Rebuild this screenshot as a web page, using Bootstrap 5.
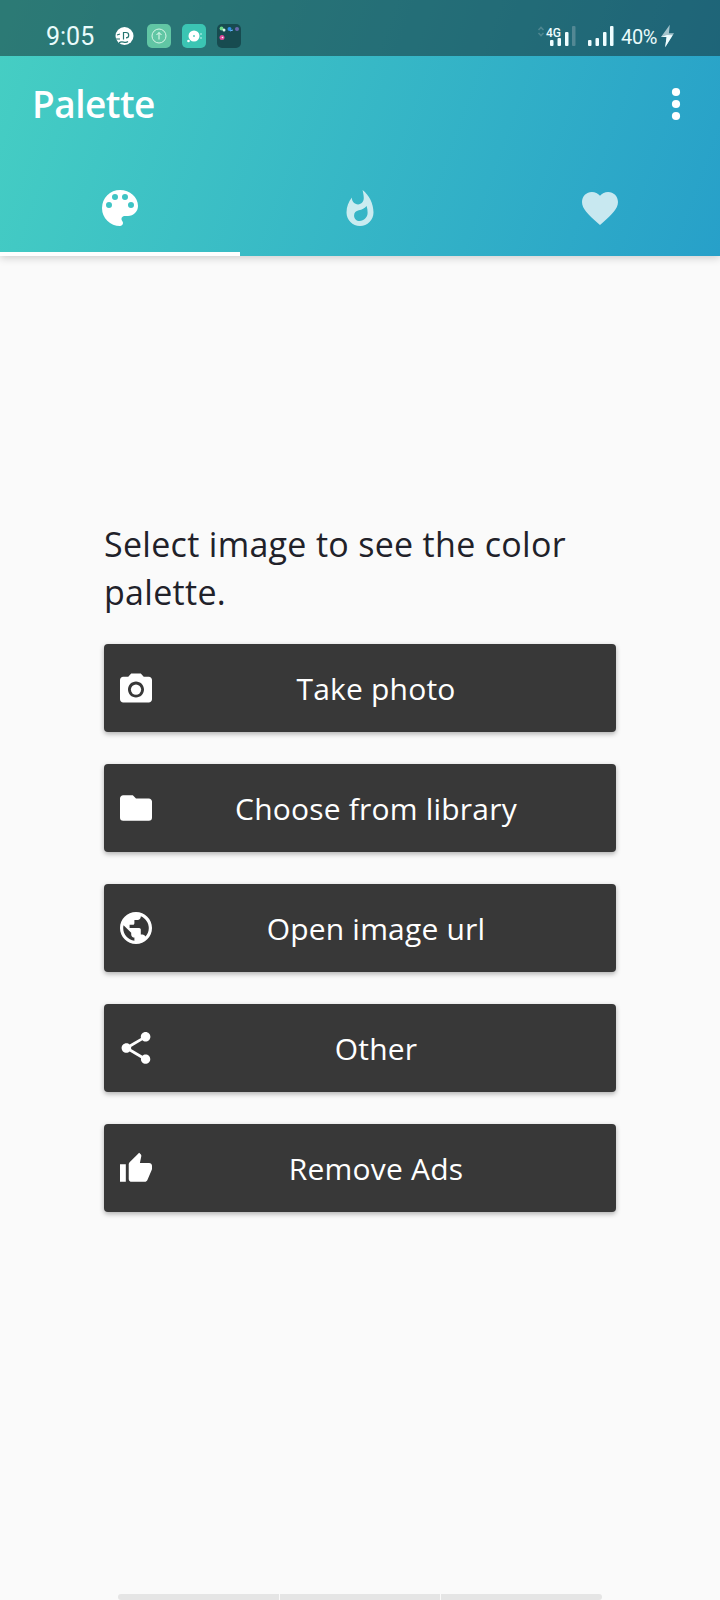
<!DOCTYPE html>
<html lang="en">
<head>
<meta charset="utf-8">
<meta name="viewport" content="width=device-width, initial-scale=1">
<title>Palette</title>
<link href="https://cdn.jsdelivr.net/npm/bootstrap@5.3.0/dist/css/bootstrap.min.css" rel="stylesheet">
<style>
body{background:#fafafa;font-family:"Open Sans","Noto Sans",sans-serif;color:#212129;height:1600px;overflow:hidden}
.top-area{height:256px;background:linear-gradient(110deg,#46cfc3 0%,#27a0c9 100%);box-shadow:0 2px 8px rgba(0,0,0,.18)}
.status-strip{height:56px;padding:17px 46px 0 46px;background:rgba(18,34,36,.49);font-family:Roboto,sans-serif;color:#e9fbfb}
.clock{font-size:25px;line-height:39px;width:68px}
.battery{font-size:20px;line-height:41px;letter-spacing:-.4px}
.title-row{height:104px;padding:0 40px 0 32px}
.app-title{font-family:"Open Sans",sans-serif;font-weight:600;font-size:37px;line-height:50px;margin-top:-8px;letter-spacing:-.5px}
.tab-item{height:96px;border-bottom:4px solid transparent;padding-top:4px;color:#fff}
.tab-item.active{border-color:#fff}
.tab-item:not(.active) svg{opacity:.74}
.content{padding:264px 104px 0}
.prompt{font-size:34px;line-height:48px;letter-spacing:.3px;height:96px;margin-bottom:28px;white-space:nowrap}
.stack{gap:32px}
.action{height:88px;background:#383838;color:#fff;border:0;border-radius:4px;padding:0 16px;box-shadow:0 2px 5px rgba(0,0,0,.3);font-size:30px;line-height:44px;letter-spacing:.2px}
.action:hover{background:#444;color:#fff}
.caption-text{padding-top:2px}
.nav-hint{gap:1px;margin:382px 14px 0}
.nav-hint span{height:6px;background:#e5e5e5}
</style>
</head>
<body>
<header class="top-area text-white">
  <div class="status-strip d-flex align-items-start">
    <span class="clock">9:05</span>
    <svg width="130" height="28" viewBox="114 22 130 28" style="margin-top:5px" fill="none">
      <circle cx="124.500" cy="36" r="9" fill="#fff"/>
      <path d="M123.500 39.500v-7h2.500a2.700 2.700 0 0 1 0 5.400M117 35l3-1M116 39h4M119 43c3-3 6 1 9-1.500" stroke="#25746f" stroke-width="1.200"/>
      <rect x="147" y="24" width="24" height="24" rx="5" fill="#61c6a4"/>
      <circle cx="159" cy="36" r="7" stroke="#d6f5e6"/><path d="M159 39.500v-7M156.500 35l2.500-2.500 2.500 2.500" stroke="#e7fff2"/>
      <rect x="182" y="24" width="24" height="24" rx="5" fill="#3bc5b3"/>
      <circle cx="194" cy="36" r="5.500" fill="#fff"/><circle cx="188.500" cy="41" r="1.300" fill="#fff"/><circle cx="194" cy="36" r="1" fill="#55cfc0"/>
      <path d="M200 34h2M200 38h2" stroke="#c5f3ec"/>
      <rect x="217" y="24" width="24" height="24" rx="5" fill="#174b50"/>
      <circle cx="221.500" cy="28.500" r="1.900" fill="#6bd889"/><circle cx="224" cy="30" r="1.500" fill="#d6f5e6"/>
      <circle cx="229.500" cy="29" r="2" fill="#2d8fe8"/><path d="M230 31l3-1" stroke="#68b7ff"/>
      <circle cx="237" cy="29" r="2" fill="#6868ad"/><circle cx="222" cy="37.500" r="2.500" fill="#e0489a"/><circle cx="222.500" cy="37.500" r=".8" fill="#fff"/>
    </svg>
    <svg class="ms-auto" width="81" height="28" viewBox="536 22 81 28" style="margin-top:5px">
      <path d="M538.500 30l2.500-2.500 2.500 2.500M538.500 33l2.500 2.500 2.500-2.500" fill="none" stroke="#4f8690" stroke-width="1.600"/>
      <g fill="#effdff"><rect x="550" y="40" width="3.500" height="6" rx="1"/><rect x="557.500" y="38" width="3.500" height="8" rx="1"/><rect x="565" y="32" width="3.500" height="14" rx="1"/>
      <rect x="588" y="40" width="3.500" height="6" rx="1"/><rect x="595.500" y="38" width="3.500" height="8" rx="1"/><rect x="603" y="32" width="3.500" height="14" rx="1"/><rect x="610" y="26" width="3.500" height="20" rx="1"/>
      <text x="546" y="37" font-family="Roboto,sans-serif" font-weight="500" font-size="13.500" textLength="15" lengthAdjust="spacingAndGlyphs">4G</text></g>
      <rect x="572" y="26" width="3.500" height="20" rx="1" fill="#538894"/>
    </svg>
    <span class="battery ms-1">40%</span>
    <svg width="13" height="24" viewBox="0 0 14 24" class="ms-1" style="margin-top:7px"><path d="M9.500 0L0 13h6L4.500 24 14 9H8.500z" fill="#a5c4cc"/><path d="M0 13L6.500 11 12.500 11.300 4.500 24 6 13z" fill="#effdff"/></svg>
  </div>
  <div class="title-row d-flex align-items-center justify-content-between">
    <div class="app-title">Palette</div>
    <svg width="8" height="32" viewBox="0 0 8 32" fill="#fff" style="margin-top:-8px" overflow="visible"><circle cx="4" cy="4" r="4.100"/><circle cx="4" cy="16" r="4.100"/><circle cx="4" cy="28" r="4.100"/></svg>
  </div>
  <nav class="row g-0">
    <div class="col-4 tab-item active d-flex align-items-center justify-content-center"><svg width="36" height="36" viewBox="3 3 18 18" fill="currentColor"><path d="M12 3a9 9 0 0 0 0 18c.83 0 1.500-.67 1.500-1.500 0-.39-.15-.74-.39-1.010-.23-.26-.38-.61-.38-.99 0-.83.67-1.500 1.500-1.500H16c2.760 0 5-2.240 5-5 0-4.420-4.030-8-9-8zm-5.500 9a1.500 1.500 0 1 1 0-3 1.500 1.500 0 0 1 0 3zm3-4a1.500 1.500 0 1 1 0-3 1.500 1.500 0 0 1 0 3zm5 0a1.500 1.500 0 1 1 0-3 1.500 1.500 0 0 1 0 3zm3 4a1.500 1.500 0 1 1 0-3 1.500 1.500 0 0 1 0 3z"/></svg></div>
    <div class="col-4 tab-item d-flex align-items-center justify-content-center"><svg width="28" height="36" viewBox="4 .67 16 21.330" fill="currentColor"><path d="M13.500.67s.74 2.650.74 4.800c0 2.060-1.350 3.730-3.410 3.730-2.070 0-3.630-1.670-3.630-3.730l.03-.36C5.210 7.510 4 10.620 4 14c0 4.420 3.580 8 8 8s8-3.580 8-8C20 8.610 17.410 3.800 13.500.67zM11.710 19c-1.780 0-3.220-1.400-3.220-3.140 0-1.620 1.050-2.760 2.810-3.120 1.770-.36 3.600-1.210 4.620-2.580.39 1.290.59 2.650.59 4.040 0 2.650-2.150 4.800-4.800 4.800z"/></svg></div>
    <div class="col-4 tab-item d-flex align-items-center justify-content-center"><svg width="36" height="33" viewBox="2 3 20 18.350" fill="currentColor"><path d="M12 21.350l-1.450-1.320C5.400 15.360 2 12.280 2 8.500 2 5.420 4.420 3 7.500 3c1.740 0 3.410.81 4.500 2.090C13.090 3.810 14.760 3 16.500 3 19.580 3 22 5.420 22 8.500c0 3.780-3.400 6.860-8.550 11.540L12 21.350z"/></svg></div>
  </nav>
</header>
<main class="content">
  <p class="prompt">Select image to see the color<br>palette.</p>
  <div class="stack d-flex flex-column">
    <button class="action btn d-flex align-items-center"><svg width="32" height="32" viewBox="2 1 20 20" fill="currentColor"><circle cx="12" cy="12" r="3.200"/><path d="M9 2L7.170 4H4c-1.100 0-2 .9-2 2v12c0 1.100.9 2 2 2h16c1.100 0 2-.9 2-2V6c0-1.100-.9-2-2-2h-3.170L15 2H9zm3 15c-2.760 0-5-2.240-5-5s2.240-5 5-5 5 2.240 5 5-2.240 5-5 5z"/></svg><span class="caption-text flex-grow-1">Take photo</span></button>
    <button class="action btn d-flex align-items-center"><svg width="32" height="32" viewBox="2 2 20 20" fill="currentColor"><path d="M10 4H4c-1.110 0-2 .89-2 2v12a2 2 0 0 0 2 2h16a2 2 0 0 0 2-2V8c0-1.110-.9-2-2-2h-8l-2-2z"/></svg><span class="caption-text flex-grow-1">Choose from library</span></button>
    <button class="action btn d-flex align-items-center"><svg width="32" height="32" viewBox="2 2 20 20" fill="currentColor"><path d="M12 2C6.480 2 2 6.480 2 12s4.480 10 10 10 10-4.480 10-10S17.520 2 12 2zm-1 17.930c-3.950-.49-7-3.850-7-7.930 0-.62.080-1.210.21-1.790L9 15v1c0 1.100.9 2 2 2v1.930zm6.900-2.540c-.26-.81-1-1.390-1.900-1.390h-1v-3c0-.55-.45-1-1-1H8v-2h2c.55 0 1-.45 1-1V7h2c1.100 0 2-.9 2-2v-.41c2.930 1.190 5 4.060 5 7.410 0 2.080-.8 3.970-2.100 5.390z"/></svg><span class="caption-text flex-grow-1">Open image url</span></button>
    <button class="action btn d-flex align-items-center"><svg width="32" height="32" viewBox="2 2 20 20" fill="currentColor"><path d="M18 16.080c-.76 0-1.440.3-1.960.77L8.910 12.700c.05-.23.090-.46.090-.7s-.04-.47-.09-.7l7.050-4.110c.54.5 1.250.81 2.040.81 1.660 0 3-1.340 3-3s-1.340-3-3-3-3 1.340-3 3c0 .24.040.47.090.7L8.040 9.810C7.500 9.310 6.790 9 6 9c-1.660 0-3 1.340-3 3s1.340 3 3 3c.79 0 1.500-.31 2.040-.81l7.120 4.160c-.05.21-.08.430-.08.650 0 1.610 1.310 2.920 2.920 2.920s2.920-1.310 2.920-2.920-1.310-2.920-2.920-2.920z"/></svg><span class="caption-text flex-grow-1">Other</span></button>
    <button class="action btn d-flex align-items-center"><svg width="32" height="32" viewBox="1 .5 22 22" fill="currentColor"><path d="M1 21h4V9H1v12zm22-11c0-1.100-.9-2-2-2h-6.310l.95-4.570.03-.32c0-.41-.17-.79-.44-1.060L14.170 1 7.590 7.590C7.220 7.950 7 8.450 7 9v10c0 1.100.9 2 2 2h9c.83 0 1.540-.5 1.840-1.220l3.020-7.050c.09-.23.140-.47.140-.73v-2z"/></svg><span class="caption-text flex-grow-1">Remove Ads</span></button>
  </div>
  <div class="nav-hint d-flex"><span class="flex-fill rounded-start"></span><span class="flex-fill"></span><span class="flex-fill rounded-end"></span></div>
</main>
<script src="https://cdn.jsdelivr.net/npm/bootstrap@5.3.0/dist/js/bootstrap.bundle.min.js"></script>
</body>
</html>
